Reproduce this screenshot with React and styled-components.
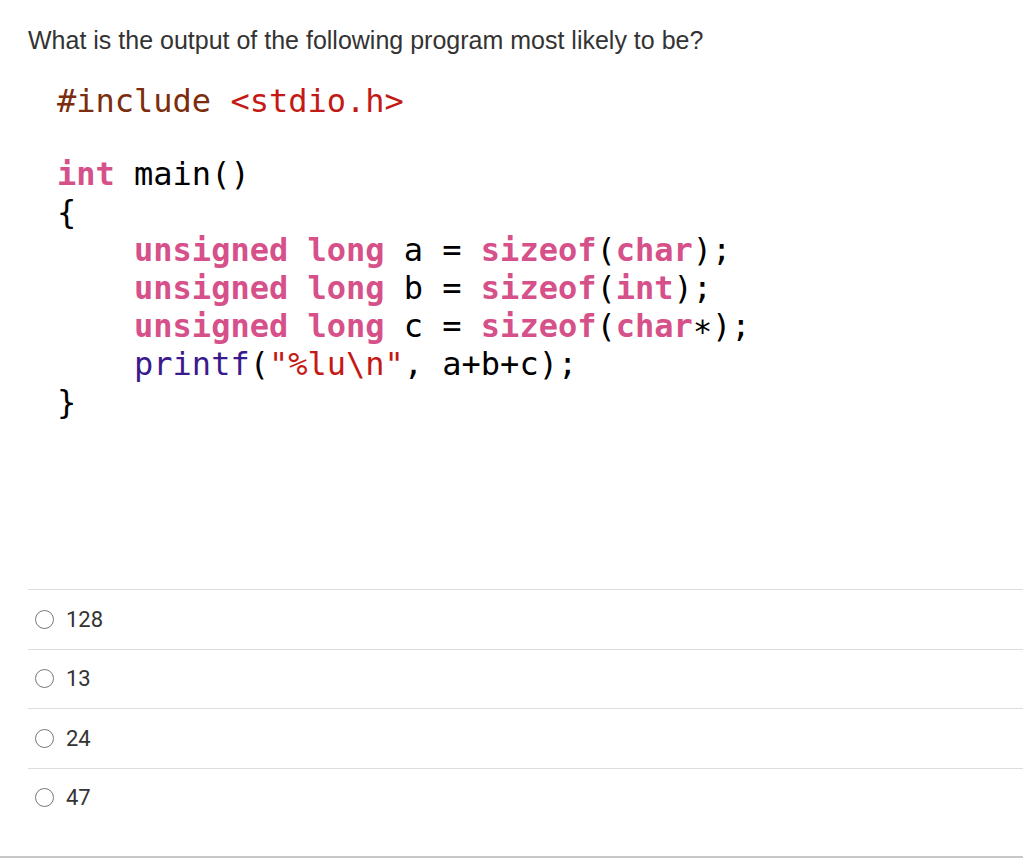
import React from "react"
import styled, { createGlobalStyle } from "styled-components"

const GlobalStyle = createGlobalStyle`
  body {
    margin: 0;
    background: #ffffff;
  }
`

const Page = styled.div`
  width: 1023px;
  height: 858px;
  box-sizing: border-box;
  border-bottom: 2px solid #c8c8c8;
  display: flex;
  flex-direction: column;
`

const Question = styled.div`
  padding: 26px 0 0 28px;
  font-family: "Liberation Sans", Arial, sans-serif;
  font-size: 25px;
  line-height: 28px;
  color: #333333;
`

const Code = styled.div`
  margin: 28px 0 0 57px;
  height: 507px;
  font-family: "DejaVu Sans Mono", monospace;
  font-size: 32px;
  color: #000000;
  white-space: pre;
`

const Include = styled.div`
  line-height: 38px;
  height: 73px;
`

const Body = styled.div`
  line-height: 38px;
`

const Tok = styled.span`
  color: ${p => p.$c};
  font-weight: ${p => (p.$bold ? 700 : 400)};
`

const Options = styled.div`
  margin-left: 28px;
`

const Option = styled.label`
  display: flex;
  align-items: center;
  gap: 12px;
  height: 58.5px;
  padding-left: 7px;
  border-top: 1px solid #dddddd;
  font-family: Roboto, "Liberation Sans", sans-serif;
  font-size: 22px;
  color: #333333;
`

const Radio = styled.span`
  width: 17px;
  height: 17px;
  border-radius: 50%;
  border: 1.5px solid #777777;
`

const pink = "#d6508a"
const brown = "#7b2d0d"
const red = "#c41a16"
const purple = "#3b1a8c"

const K = ({ children }) => <Tok $c={pink} $bold>{children}</Tok>

const App = () => (
  <Page>
    <GlobalStyle />
    <Question>What is the output of the following program most likely to be?</Question>
    <Code>
      <Include>
        <Tok $c={brown}>#include </Tok><Tok $c={red}>&lt;stdio.h&gt;</Tok>
      </Include>
      <Body>
        <K>int</K>{" main()\n{\n    "}
        <K>unsigned long</K>{" a = "}<K>sizeof</K>(<K>char</K>);{"\n    "}
        <K>unsigned long</K>{" b = "}<K>sizeof</K>(<K>int</K>);{"\n    "}
        <K>unsigned long</K>{" c = "}<K>sizeof</K>(<K>char</K>∗);{"\n    "}
        <Tok $c={purple}>printf</Tok>(<Tok $c={red}>"%lu\n"</Tok>, a+b+c);{"\n}"}
      </Body>
    </Code>
    <Options>
      {["128", "13", "24", "47"].map(v => (
        <Option key={v}>
          <Radio />
          {v}
        </Option>
      ))}
    </Options>
  </Page>
)

export default App
